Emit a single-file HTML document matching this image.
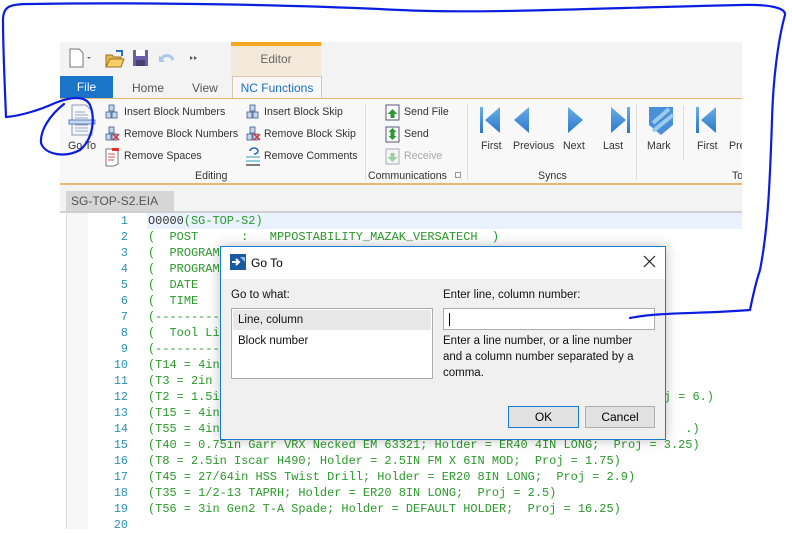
<!DOCTYPE html>
<html><head><meta charset="utf-8"><style>
*{margin:0;padding:0;box-sizing:border-box}
body{width:792px;height:529px;overflow:hidden;background:#fff;font-family:"Liberation Sans",sans-serif;position:relative;font-size:11px;color:#333}
.abs{position:absolute}
.code{font-family:"Liberation Mono",monospace;font-size:11.95px;color:#2a9a2a;white-space:pre;line-height:16px}
.num{font-family:"Liberation Mono",monospace;font-size:11.8px;color:#2b91af;line-height:16px;text-align:right;width:40px}
.lbl{font-size:10.6px;color:#333;white-space:nowrap}
</style></head><body>
<div class="abs" style="left:60px;top:42px;width:682px;height:487px;background:#f3f3f3"></div>
<svg class="abs" style="left:66px;top:46px" width="140" height="24">
<path d="M4 3h9l4 4v14H4z" fill="#fff" stroke="#777"/><path d="M21 11l2 2 2-2z" fill="#666"/>
<path d="M40 9h6l2 2h7v10H40z" fill="#e8b84a" stroke="#a07020"/><path d="M44 13h14l-3 8H40z" fill="#f5cf6b" stroke="#a07020"/><path d="M50 5l6 0 0 5" stroke="#2a70c0" fill="none" stroke-width="2"/>
<rect x="67" y="4" width="15" height="16" fill="#6a5fa8"/><rect x="70" y="4" width="9" height="6" fill="#fff"/><rect x="70" y="14" width="9" height="6" fill="#4a4070"/>
<path d="M95 14c2-6 10-6 12 0" stroke="#aac8e8" stroke-width="3" fill="none"/><path d="M93 9v7h6z" fill="#aac8e8"/>
<path d="M124 10l3 2-3 2zM128 10l3 2-3 2z" fill="#555"/>
</svg>
<div class="abs" style="left:231px;top:42px;width:90px;height:34px;background:#f3e9da;border-top:4px solid #f5a623"></div>
<div class="abs lbl" style="left:231px;top:52px;width:90px;text-align:center;color:#666;font-size:12px">Editor</div>
<div class="abs" style="left:60px;top:76px;width:53px;height:22px;background:#1a74c8;color:#fff;font-size:12px;text-align:center;line-height:22px">File</div>
<div class="abs lbl" style="left:132px;top:81px;font-size:12px;color:#555">Home</div>
<div class="abs lbl" style="left:192px;top:81px;font-size:12px;color:#555">View</div>
<div class="abs" style="left:232px;top:76px;width:90px;height:23px;background:#f8f8f8;border:1px solid #d8c8b0;border-bottom:none;color:#1a6fc0;font-size:12px;text-align:center;line-height:22px">NC Functions</div>
<div class="abs" style="left:60px;top:98px;width:682px;height:87px;background:#f8f8f8;border-top:1px solid #e8b870;border-bottom:2px solid #e8b870"></div>
<svg class="abs" style="left:68px;top:103px" width="28" height="34"><path d="M4 2h14l6 6v24H4z" fill="#f4f6fa" stroke="#8a9ab0"/><g stroke="#9aa8c0"><path d="M7 9h10M7 12h13M7 15h13M7 22h13M7 25h13M7 28h13"/></g><rect x="1" y="17" width="26" height="4" fill="#c8d8f0" stroke="#5a80c0"/></svg>
<div class="abs lbl" style="left:68px;top:140px">Go To</div>
<svg class="abs" style="left:104px;top:104px" width="16" height="64"><g fill="#c8d4e8" stroke="#3a5a90" stroke-width=".8"><rect x="5" y="1" width="5" height="6"/><rect x="2" y="8" width="5" height="6"/><rect x="8" y="8" width="5" height="6"/><rect x="5" y="23" width="5" height="6"/><rect x="2" y="30" width="5" height="6"/><rect x="8" y="30" width="5" height="6"/></g><path d="M9 30l6 6M15 30l-6 6" stroke="#e03030" stroke-width="1.5"/><path d="M2 45h11l1 1v14l-4 2H2z" fill="#fff" stroke="#777"/><rect x="8" y="44" width="7" height="3" fill="#e03030"/><path d="M4 50h7M4 53h7M4 56h6" stroke="#e05050"/></svg>
<div class="abs lbl" style="left:124px;top:106px">Insert Block Numbers</div>
<div class="abs lbl" style="left:124px;top:128px">Remove Block Numbers</div>
<div class="abs lbl" style="left:124px;top:150px">Remove Spaces</div>
<svg class="abs" style="left:245px;top:104px" width="16" height="64"><g fill="#c8d4e8" stroke="#3a5a90" stroke-width=".8"><rect x="5" y="1" width="5" height="6"/><rect x="2" y="8" width="5" height="6"/><rect x="8" y="8" width="5" height="6"/><rect x="5" y="23" width="5" height="6"/><rect x="2" y="30" width="5" height="6"/><rect x="8" y="30" width="5" height="6"/></g><path d="M9 30l6 6M15 30l-6 6" stroke="#e03030" stroke-width="1.5"/><path d="M5 47a4 3 0 1 1 4 3" stroke="#2060c0" fill="none" stroke-width="1.5"/><path d="M1 53h14M1 57h14" stroke="#30a0c0"/><path d="M1 61h14" stroke="#000"/></svg>
<div class="abs lbl" style="left:264px;top:106px">Insert Block Skip</div>
<div class="abs lbl" style="left:264px;top:128px">Remove Block Skip</div>
<div class="abs lbl" style="left:264px;top:150px">Remove Comments</div>
<div class="abs lbl" style="left:195px;top:170px">Editing</div>
<div class="abs" style="left:365px;top:104px;width:1px;height:76px;background:#ddd"></div>
<svg class="abs" style="left:385px;top:104px" width="16" height="62"><rect x="1" y="1" width="13" height="15" fill="#fff" stroke="#557"/><path d="M7.5 5l5 5h-3v4h-4v-4h-3z" fill="#2a9a30"/><rect x="1" y="23" width="13" height="15" fill="#fff" stroke="#557"/><path d="M7.5 24l4 4h-2v4h2l-4 4-4-4h2v-4h-2z" fill="#2a9a30"/><rect x="1" y="45" width="13" height="15" fill="#f4f4f4" stroke="#aab"/><path d="M7.5 58l-5-5h3v-4h4v4h3z" fill="#9ad0a0"/></svg>
<div class="abs lbl" style="left:404px;top:106px">Send File</div>
<div class="abs lbl" style="left:404px;top:128px">Send</div>
<div class="abs lbl" style="left:404px;top:150px;color:#aaa">Receive</div>
<div class="abs lbl" style="left:368px;top:170px">Communications</div>
<div class="abs" style="left:455px;top:172px;width:6px;height:6px;border:1px solid #999"></div>
<div class="abs" style="left:467px;top:104px;width:1px;height:76px;background:#ddd"></div>
<svg class="abs" style="left:478px;top:106px" width="300" height="30">
<defs><linearGradient id="g" x1="0" x2="0" y1="0" y2="1"><stop offset="0" stop-color="#6aaee8"/><stop offset="1" stop-color="#2a78c8"/></linearGradient></defs>
<rect x="2" y="1" width="3" height="26" fill="url(#g)"/><path d="M22 1v26L7 14z" fill="url(#g)"/>
<path d="M51 1v26L36 14z" fill="url(#g)"/>
<path d="M90 1v26l15-13z" fill="url(#g)"/>
<path d="M133 1v26l15-13z" fill="url(#g)"/><rect x="149" y="1" width="3" height="26" fill="url(#g)"/>
<path d="M171 1h24v18l-12 10-12-10z" fill="#4a90d8"/><path d="M175 17l16-14M175 25l20-16" stroke="#9ccaf0" stroke-width="4"/>
<rect x="218" y="1" width="3" height="26" fill="url(#g)"/><path d="M238 1v26L223 14z" fill="url(#g)"/>
<path d="M266 14h3" stroke="#555"/></svg>
<div class="abs lbl" style="left:481px;top:140px">First</div>
<div class="abs lbl" style="left:513px;top:140px">Previous</div>
<div class="abs lbl" style="left:563px;top:140px">Next</div>
<div class="abs lbl" style="left:603px;top:140px">Last</div>
<div class="abs lbl" style="left:538px;top:170px">Syncs</div>
<div class="abs" style="left:636px;top:104px;width:1px;height:76px;background:#ddd"></div>
<div class="abs lbl" style="left:647px;top:140px">Mark</div>
<div class="abs" style="left:683px;top:106px;width:1px;height:54px;background:#ddd"></div>
<div class="abs lbl" style="left:697px;top:140px">First</div>
<div class="abs lbl" style="left:729px;top:140px">Pre</div>
<div class="abs lbl" style="left:732px;top:170px">To</div>
<div class="abs" style="left:742px;top:40px;width:50px;height:200px;background:#fff"></div>
<div class="abs" style="left:66px;top:191px;width:108px;height:21px;background:#d6d6d6;color:#555;font-size:12px;line-height:21px;padding-left:5px">SG-TOP-S2.EIA <span style="margin-left:6px;color:#777">✕</span></div>
<div class="abs" style="left:60px;top:211px;width:682px;height:2px;background:#cfcfcf"></div>
<div class="abs" style="left:60px;top:213px;width:682px;height:316px;background:#fff"></div>
<div class="abs" style="left:66px;top:213px;width:22px;height:316px;background:#f6f6f6;border-left:1px solid #ddd"></div>
<div class="abs" style="left:147px;top:213px;width:595px;height:16px;background:#eaf3fd"></div>
<div class="abs num" style="left:88px;top:213px">1<br>2<br>3<br>4<br>5<br>6<br>7<br>8<br>9<br>10<br>11<br>12<br>13<br>14<br>15<br>16<br>17<br>18<br>19<br>20</div>
<div class="abs code" style="left:148px;top:213px"><span style="color:#333">O0000</span>(SG-TOP-S2)
(  POST      :   MPPOSTABILITY_MAZAK_VERSATECH  )
(  PROGRAM   :   SG-TOP-S2                      )
(  PROGRAM   :   SG-TOP-S2                      )
(  DATE      :   2019                           )
(  TIME      :   10:00                          )
(-----------------------------------------------)
(  Tool List                                    )
(-----------------------------------------------)
(T14 = 4in Face Mill; Holder = 4IN SHELL MILL;  Proj = 2.5)
(T3 = 2in Face Mill; Holder = 2IN SHELL;  Proj = 2.)
(T2 = 1.5in Garr VRX Necked EM 63321 XL2; Holder = ER40 4IN LONG 2;  Proj = 6.)
(T15 = 4in Face Mill; Holder = 4IN SHELL MILL;  Proj = 2.)
(T55 = 4in Garr VRX Necked EM 63321; Holder = ER40 4IN LONG MODS;  Proj    .)
(T40 = 0.75in Garr VRX Necked EM 63321; Holder = ER40 4IN LONG;  Proj = 3.25)
(T8 = 2.5in Iscar H490; Holder = 2.5IN FM X 6IN MOD;  Proj = 1.75)
(T45 = 27/64in HSS Twist Drill; Holder = ER20 8IN LONG;  Proj = 2.9)
(T35 = 1/2-13 TAPRH; Holder = ER20 8IN LONG;  Proj = 2.5)
(T56 = 3in Gen2 T-A Spade; Holder = DEFAULT HOLDER;  Proj = 16.25)
</div>
<div class="abs" style="left:742px;top:213px;width:50px;height:316px;background:#fff"></div>
<div class="abs" style="left:220px;top:246px;width:446px;height:194px;background:#f0f0f0;border:1px solid #1a7ad0;box-shadow:0 0 12px rgba(0,0,0,.25)">
<div style="height:32px;background:#fff;position:relative">
<svg class="abs" style="left:9px;top:7px" width="16" height="16"><rect width="16" height="16" fill="#1a5aa0"/><path d="M2 8h7M6 5l3 3-3 3" stroke="#fff" stroke-width="2" fill="none"/><path d="M10 3h5v5z" fill="#8ac0f0"/></svg>
<div class="abs" style="left:30px;top:9px;font-size:12px;color:#000">Go To</div>
<svg class="abs" style="left:422px;top:8px" width="14" height="14"><path d="M1 1l11 11M12 1L1 12" stroke="#222" stroke-width="1.2"/></svg>
</div>
<div class="abs" style="left:10px;top:42px;font-size:11.5px;color:#111">Go to what:</div>
<div class="abs" style="left:10px;top:61px;width:202px;height:71px;background:#fff;border:1px solid #adadad">
<div style="height:20px;background:#e8e8e8;margin:1px;padding-left:5px;line-height:20px;font-size:11.5px;color:#111">Line, column</div>
<div style="padding-left:6px;line-height:20px;font-size:11.5px;color:#111">Block number</div></div>
<div class="abs" style="left:222px;top:42px;font-size:11.5px;color:#111">Enter line, column number:</div>
<div class="abs" style="left:222px;top:61px;width:212px;height:22px;background:#fff;border:1px solid #adadad"><div style="margin:4px 0 0 5px;width:1px;height:13px;background:#000"></div></div>
<div class="abs" style="left:222px;top:86px;width:210px;font-size:11.5px;color:#111;line-height:16px">Enter a line number, or a line number and a column number separated by a comma.</div>
<div class="abs" style="left:287px;top:159px;width:71px;height:22px;background:#e1e1e1;border:1px solid #1a7ad0;text-align:center;line-height:20px;font-size:12px;color:#000">OK</div>
<div class="abs" style="left:364px;top:159px;width:70px;height:22px;background:#e1e1e1;border:1px solid #adadad;text-align:center;line-height:20px;font-size:12px;color:#000">Cancel</div>
</div>
<svg class="abs" style="left:0;top:0" width="792" height="529"><path d="M630 318C660 312 700 314 750 310C752 300 755 285 760 270C768 230 770 180 772 120C773 80 778 40 785 15C786 8 770 4 740 5C600 8 480 14 400 10C300 5 150 2 30 4C10 4 3 6 3 20C3 50 5 90 6 117C20 116 40 110 55 103C70 97 85 95 90 105C96 120 92 140 80 150C65 158 45 155 41 143C40 130 50 115 64 104" fill="none" stroke="#0a1ee0" stroke-width="2.2" stroke-linecap="round"/></svg>
</body></html>
